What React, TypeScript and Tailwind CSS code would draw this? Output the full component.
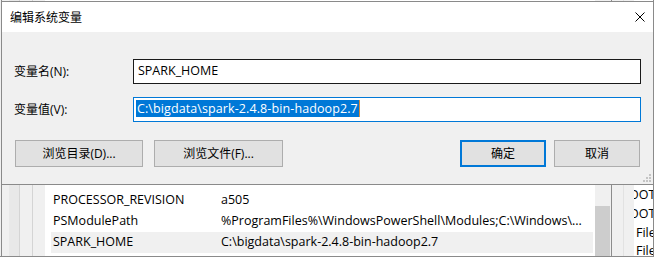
import React from "react";

const latin = "font-['Open_Sans','Noto_Sans_CJK_SC',sans-serif]";

function Row({ name, value, selected }: { name: string; value: string; selected?: boolean }) {
  return (
    <div className={`flex h-[21px] items-center ml-[6px] mr-[2px] whitespace-nowrap overflow-hidden ${selected ? "bg-[#f0f0f0]" : ""}`}>
      <div className="w-[170px] pl-[2px] shrink-0">{name}</div>
      <div className="shrink-0">{value}</div>
    </div>
  );
}

function Button({ label, w, primary }: { label: string; w: string; primary?: boolean }) {
  return (
    <div
      className={`${w} h-[27px] flex items-center justify-center bg-[#e1e1e1] text-[12px] ${
        primary ? "border-2 border-[#0078d7]" : "border border-[#adadad]"
      }`}
    >
      {label}
    </div>
  );
}

export default function App() {
  return (
    <div className={`relative w-[654px] h-[257px] overflow-hidden bg-[#f0f0f0] text-black ${latin} text-[12.5px]`}>
      {/* background window */}
      <div className="flex flex-col h-full">
        <div className="flex flex-1 min-h-0">
          <div className="w-[1px] bg-[#f0f0f0]" />
          <div className="w-[1px] bg-[#8a8a8a]" />
          <div className="w-[7px] bg-[#f0f0f0]" />
          <div className="w-[10px] bg-[#e8e8e8]" />
          <div className="w-[1px] bg-[#d4d4d4]" />
          <div className="w-[12px] bg-[#f0f0f0]" />
          <div className="w-[1px] bg-[#d4d4d4]" />
          <div className="w-[12px] bg-[#f0f0f0]" />
          <div className="w-[550px] bg-white pt-[169px] flex flex-col">
            <Row name="PROCESSOR_LEVEL" value="25" />
            <Row name="PROCESSOR_REVISION" value="a505" />
            <Row
              name="PSModulePath"
              value="%ProgramFiles%\WindowsPowerShell\Modules;C:\Windows\..."
            />
            <Row name="SPARK_HOME" value="C:\bigdata\spark-2.4.8-bin-hadoop2.7" selected />
          </div>
          <div className="w-[16px] bg-[#f0f0f0] flex flex-col pt-[206px]">
            <div className="w-[15px] flex-1 bg-[#cdcdcd]" />
          </div>
          <div className="w-[1px] bg-[#8c8c8c]" />
          <div className="w-[11px] bg-[#f0f0f0]" />
          <div className="w-[1px] bg-[#e2e2e2]" />
          <div className="w-[10px] bg-[#f0f0f0]" />
          <div className="w-[19px] bg-white overflow-hidden pt-[186px] flex flex-col whitespace-nowrap">
            <div className="h-[20px] flex items-center ml-[-5px]">OOT</div>
            <div className="h-[20px] flex items-center ml-[-5px]">OOT</div>
            <div className="h-[20px] flex items-center pl-[2px]">File</div>
            <div className="h-[20px] flex items-center pl-[2px]">File</div>
          </div>
          <div className="w-[1px] bg-[#8a8a8a]" />
        </div>
        <div className="h-[1px] bg-[#8a8a8a]" />
      </div>

      {/* dialog */}
      <div className="absolute left-[1px] top-[1px] w-[653px] h-[184px] border border-[#8a8a8a] flex flex-col bg-[#f0f0f0]">
        <div className="h-[30px] bg-white flex items-center justify-between pl-[8px] pr-[8px]">
          <span className="text-[12px] font-['Noto_Sans_CJK_SC',sans-serif]">编辑系统变量</span>
          <svg width="10" height="10" viewBox="0 0 10 10">
            <path d="M0.5 0.5 L9.5 9.5 M9.5 0.5 L0.5 9.5" stroke="#000" strokeWidth="1" fill="none" />
          </svg>
        </div>
        <div className="relative flex-1 flex flex-col pl-[12px] pt-[27px]">
          <div className="flex items-center">
            <div className="w-[119px] text-[12px]">变量名(N):</div>
            <div className="w-[508px] h-[25px] border border-[#1a1a1a] bg-white flex items-center pl-[4px]">
              SPARK_HOME
            </div>
          </div>
          <div className="flex items-center mt-[13px]">
            <div className="w-[119px] text-[12px]">变量值(V):</div>
            <div className="w-[508px] h-[25px] border border-[#0078d7] bg-white flex items-center pl-[2px]">
              <span className="bg-[#0078d7] text-white h-[17px] leading-[17px] px-[1px] mb-[3px] tracking-[0.1px]">
                C:\bigdata\spark-2.4.8-bin-hadoop2.7
              </span>
              <span className="w-[1px] h-[17px] bg-[#d88b3c] mb-[3px]" />
            </div>
          </div>
          <div className="flex mt-[18px] ml-[1px]">
            <Button label="浏览目录(D)..." w="w-[128px]" />
            <div className="w-[11px]" />
            <Button label="浏览文件(F)..." w="w-[129px]" />
            <div className="w-[177px]" />
            <Button label="确定" w="w-[86px]" primary />
            <div className="w-[8px]" />
            <Button label="取消" w="w-[86px]" />
          </div>
          <svg className="absolute right-[2px] bottom-[2px]" width="8" height="8" viewBox="0 0 8 8">
            <rect x="6" y="0" width="2" height="2" fill="#c4c4c4" />
            <rect x="3" y="3" width="2" height="2" fill="#c4c4c4" />
            <rect x="6" y="3" width="2" height="2" fill="#c4c4c4" />
            <rect x="0" y="6" width="2" height="2" fill="#c4c4c4" />
            <rect x="3" y="6" width="2" height="2" fill="#c4c4c4" />
            <rect x="6" y="6" width="2" height="2" fill="#c4c4c4" />
          </svg>
        </div>
      </div>
    </div>
  );
}
